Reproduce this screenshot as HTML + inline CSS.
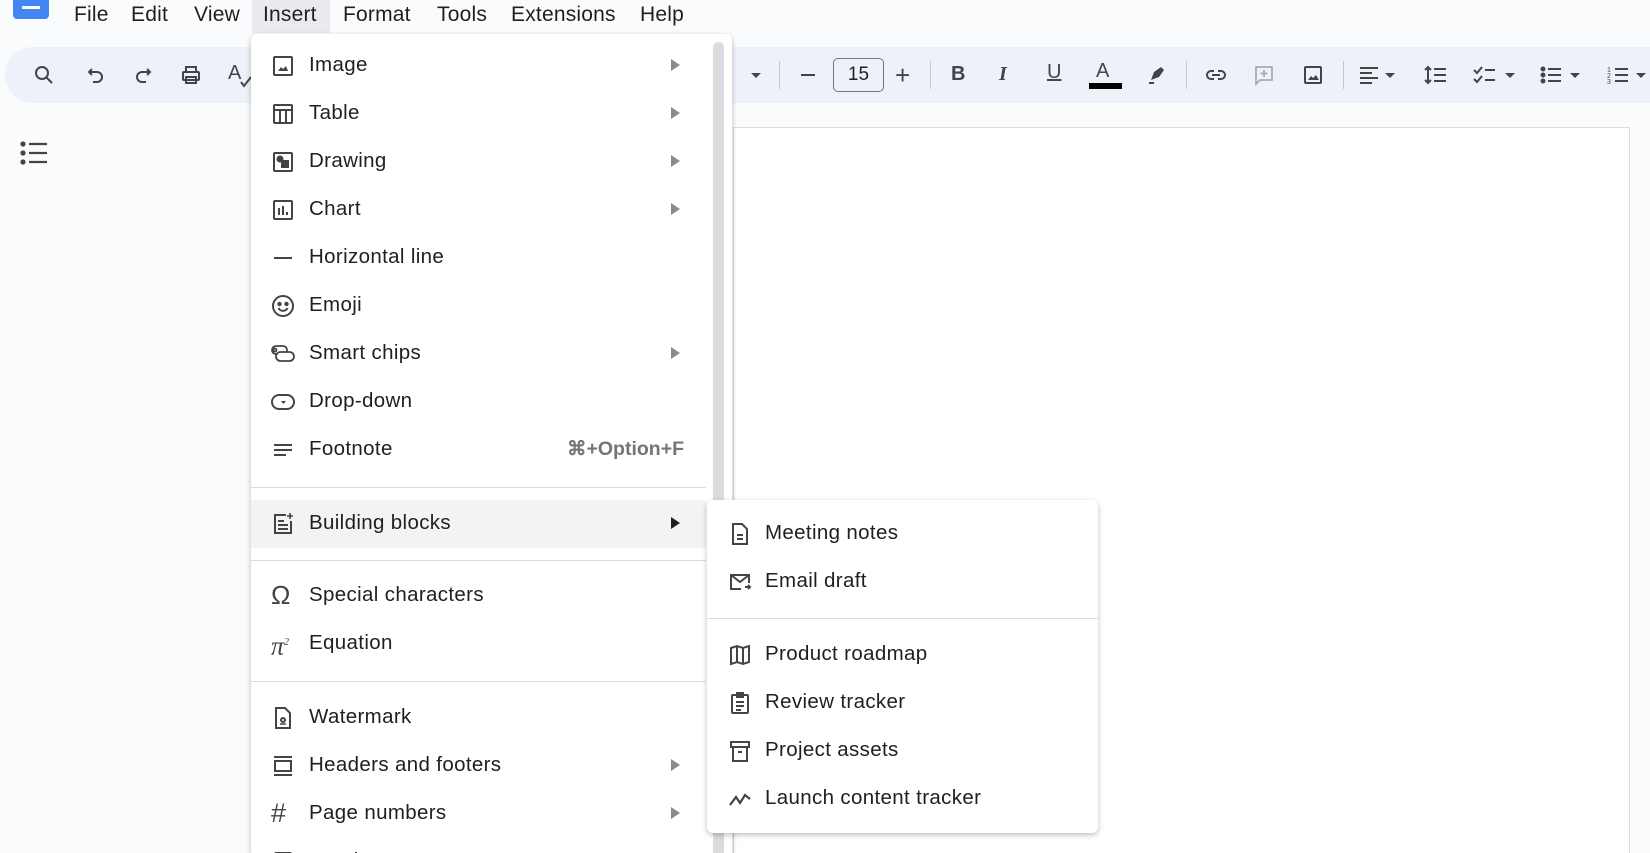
<!DOCTYPE html>
<html style="width:1650px;height:853px;overflow:hidden"><head><meta charset="utf-8"><style>
*{margin:0;padding:0;box-sizing:border-box}
body{width:1650px;height:853px;overflow:hidden;background:#f9fbfd;font-family:"Liberation Sans",Arial,sans-serif;color:#1f1f1f;position:relative}
.a{position:absolute}
.mb{position:absolute;top:3px;font-size:21px;color:#1f1f1f;letter-spacing:0.2px}
.tb{position:absolute;left:5px;top:47px;width:1645px;height:56px;background:#edf2fa;border-radius:28px 0 0 28px}
.ti{position:absolute;top:63px}
.sep{position:absolute;top:61px;width:1px;height:28px;background:#c7c7c7}
.menu{position:absolute;left:251px;top:34px;width:481px;height:819px;background:#fff;box-shadow:0 2px 6px rgba(0,0,0,.25);border-radius:6px 6px 0 0;overflow:hidden}
.it{position:absolute;left:0;width:470px;height:48px}
.it .ic{position:absolute;left:20px;top:12px;width:24px;height:24px}
.it .tx{position:absolute;left:58px;top:11px;font-size:20.5px;letter-spacing:0.35px;color:#1f1f1f}
.it .ar{position:absolute;left:420px;top:17px;width:0;height:0;border-left:9px solid #8a8a8a;border-top:6px solid transparent;border-bottom:6px solid transparent}
.hr{position:absolute;left:0;width:455px;height:1px;background:#dadce0}
.sub{position:absolute;left:707px;top:500px;width:391px;height:333px;background:#fff;box-shadow:0 2px 6px rgba(0,0,0,.25);border-radius:6px}
.sub .it{width:391px}
.sub .it .ic{left:21px}
.sub .it .tx{left:58px}
svg{overflow:visible}
</style></head><body>
<div class="a" style="left:13px;top:0;width:36px;height:19px;background:#4285f4;border-radius:0 0 4px 4px"></div>
<div class="a" style="left:22px;top:6px;width:18px;height:3px;background:#fff"></div>
<div class="a" style="left:252px;top:0;width:78px;height:33px;background:#e8eaed"></div>
<div class="mb" style="left:74px">File</div>
<div class="mb" style="left:131px">Edit</div>
<div class="mb" style="left:194px">View</div>
<div class="mb" style="left:263px">Insert</div>
<div class="mb" style="left:343px">Format</div>
<div class="mb" style="left:437px">Tools</div>
<div class="mb" style="left:511px">Extensions</div>
<div class="mb" style="left:640px">Help</div>

<div class="tb"></div>
<svg class="ti" style="left:32px" width="24" height="24" viewBox="0 0 24 24" fill="none" stroke="#444" stroke-width="2"><circle cx="10" cy="10" r="6"/><path d="M14.5 14.5L20 20"/></svg>
<svg class="ti" style="left:84px" width="24" height="24" viewBox="0 0 24 24" fill="none" stroke="#444" stroke-width="2"><path d="M8 6L5 9l3 3M5 9h8a5 5 0 010 10H9"/></svg>
<svg class="ti" style="left:131px" width="24" height="24" viewBox="0 0 24 24" fill="none" stroke="#444" stroke-width="2"><path d="M16 6l3 3-3 3M19 9h-8a5 5 0 000 10h4"/></svg>
<svg class="ti" style="left:179px" width="24" height="24" viewBox="0 0 24 24" fill="none" stroke="#444" stroke-width="2"><rect x="4" y="9" width="16" height="8" rx="1"/><path d="M7 9V4h10v5M7 14h10v6H7z"/></svg>
<div class="a" style="left:228px;top:62px;font-size:20px;color:#444">A</div>
<svg class="a" style="left:240px;top:76px" width="12" height="12" viewBox="0 0 12 12" fill="none" stroke="#444" stroke-width="2"><path d="M1 6l3 4 7-9"/></svg>
<svg class="ti" style="left:749px" width="14" height="24" viewBox="0 0 14 24"><path d="M2 10h10l-5 5z" fill="#444"/></svg>
<div class="sep" style="left:779px"></div>
<div class="a" style="left:801px;top:74px;width:14px;height:2px;background:#444"></div>
<div class="a" style="left:833px;top:58px;width:51px;height:34px;border:1.5px solid #747775;border-radius:5px;font-size:19px;text-align:center;line-height:31px">15</div>
<div class="a" style="left:895px;top:58px;font-size:26px;color:#444;line-height:34px">+</div>
<div class="sep" style="left:930px"></div>
<div class="a" style="left:951px;top:63px;font-size:20px;font-weight:bold;color:#444">B</div>
<div class="a" style="left:999px;top:63px;font-size:20px;font-weight:bold;font-style:italic;color:#444;font-family:'Liberation Serif',serif">I</div>
<div class="a" style="left:1047px;top:61px;font-size:20px;color:#444;text-decoration:underline">U</div>
<div class="a" style="left:1096px;top:60px;font-size:20px;color:#444">A</div>
<div class="a" style="left:1089px;top:83px;width:33px;height:6px;background:#000"></div>
<svg class="ti" style="left:1145px" width="24" height="24" viewBox="0 0 24 24"><path d="M6 17l3-8 7-5 3 3-5 7z" fill="#444"/><path d="M4 20h5" stroke="#444" stroke-width="2"/></svg>
<div class="sep" style="left:1186px"></div>
<svg class="ti" style="left:1204px" width="24" height="24" viewBox="0 0 24 24" fill="none" stroke="#444" stroke-width="2"><path d="M10 8H7a4 4 0 000 8h3M14 8h3a4 4 0 010 8h-3M8 12h8"/></svg>
<svg class="ti" style="left:1252px" width="24" height="24" viewBox="0 0 24 24" fill="none" stroke="#aaa" stroke-width="1.8"><path d="M4 4h16v13H8l-4 4z"/><path d="M12 7v7M8.5 10.5h7"/></svg>
<svg class="ti" style="left:1301px" width="24" height="24" viewBox="0 0 24 24" fill="none" stroke="#444" stroke-width="2"><rect x="4" y="4" width="16" height="16" rx="1"/><path d="M7 17l3-4 2 2 3-3 3 5z" fill="#444" stroke="none"/></svg>
<div class="sep" style="left:1343px"></div>
<svg class="ti" style="left:1357px" width="40" height="24" viewBox="0 0 40 24" stroke="#444" stroke-width="2"><path d="M3 5h18M3 10h12M3 15h18M3 20h12"/><path d="M28 10h10l-5 5z" fill="#444" stroke="none"/></svg>
<svg class="ti" style="left:1423px" width="26" height="24" viewBox="0 0 26 24" stroke="#444" stroke-width="2" fill="none"><path d="M5 4v16M2 7l3-3 3 3M2 17l3 3 3-3M11 6h12M11 12h12M11 18h12"/></svg>
<svg class="ti" style="left:1472px" width="46" height="24" viewBox="0 0 46 24" stroke="#444" stroke-width="2" fill="none"><path d="M2 7l3 3 5-6M2 16l3 3 5-6M13 7h10M13 17h10"/><path d="M33 10h10l-5 5z" fill="#444" stroke="none"/></svg>
<svg class="ti" style="left:1539px" width="46" height="24" viewBox="0 0 46 24" stroke="#444" stroke-width="2" fill="none"><circle cx="4" cy="6" r="1.5" fill="#444"/><circle cx="4" cy="12" r="1.5" fill="#444"/><circle cx="4" cy="18" r="1.5" fill="#444"/><path d="M9 6h13M9 12h13M9 18h13"/><path d="M31 10h10l-5 5z" fill="#444" stroke="none"/></svg>
<svg class="ti" style="left:1606px" width="40" height="24" viewBox="0 0 40 24" stroke="#444" stroke-width="2" fill="none"><path d="M9 6h13M9 12h13M9 18h13"/><text x="1" y="9" font-size="7" fill="#444" stroke="none">1</text><text x="1" y="15" font-size="7" fill="#444" stroke="none">2</text><text x="1" y="21" font-size="7" fill="#444" stroke="none">3</text><path d="M30 10h10l-5 5z" fill="#444" stroke="none"/></svg>

<svg class="a" style="left:20px;top:141px" width="28" height="24" viewBox="0 0 28 24" stroke="#444" stroke-width="2.2"><circle cx="3" cy="3" r="1.5" fill="#444"/><circle cx="3" cy="12" r="1.5" fill="#444"/><circle cx="3" cy="21" r="1.5" fill="#444"/><path d="M9 3h18M9 12h18M9 21h18"/></svg>

<div class="a" style="left:733px;top:127px;width:897px;height:726px;background:#fff;border:1px solid #dadce0;border-bottom:none"></div>

<div class="menu">
 <div class="a" style="left:462px;top:8px;width:11px;height:820px;background:#dadce0;border-radius:6px"></div>
 <div class="it" style="top:8px"><svg class="ic" viewBox="0 0 24 24" fill="none" stroke="#444" stroke-width="2"><rect x="3" y="3" width="18" height="18" rx="1"/><path d="M7 17l3-4 2 2 3-3 2 5z" fill="#444" stroke="none"/></svg><div class="tx">Image</div><div class="ar"></div></div>
 <div class="it" style="top:56px"><svg class="ic" viewBox="0 0 24 24" fill="none" stroke="#444" stroke-width="2"><rect x="3" y="3" width="18" height="18" rx="1"/><path d="M3 8h18M9 8v13M15 8v13"/></svg><div class="tx">Table</div><div class="ar"></div></div>
 <div class="it" style="top:104px"><svg class="ic" viewBox="0 0 24 24" fill="none" stroke="#444" stroke-width="2"><rect x="3" y="3" width="18" height="18" rx="1"/><circle cx="9" cy="9" r="2.5" fill="#444"/><rect x="11" y="11" width="6" height="6" fill="#444"/></svg><div class="tx">Drawing</div><div class="ar"></div></div>
 <div class="it" style="top:152px"><svg class="ic" viewBox="0 0 24 24" fill="none" stroke="#444" stroke-width="2"><rect x="3" y="3" width="18" height="18" rx="1"/><path d="M8 17v-7M12 17V8M16 17v-3"/></svg><div class="tx">Chart</div><div class="ar"></div></div>
 <div class="it" style="top:200px"><svg class="ic" viewBox="0 0 24 24" stroke="#444" stroke-width="2"><path d="M3 12h18"/></svg><div class="tx">Horizontal line</div></div>
 <div class="it" style="top:248px"><svg class="ic" viewBox="0 0 24 24" fill="none" stroke="#444" stroke-width="2"><circle cx="12" cy="12" r="10"/><circle cx="8.5" cy="10" r="1.2" fill="#444"/><circle cx="15.5" cy="10" r="1.2" fill="#444"/><path d="M7.5 14a5 5 0 009 0"/></svg><div class="tx">Emoji</div></div>
 <div class="it" style="top:296px"><svg class="ic" viewBox="0 0 24 24" fill="none" stroke="#444" stroke-width="1.8"><rect x="1" y="4" width="15" height="8" rx="4"/><rect x="5" y="10" width="18" height="9" rx="4.5" fill="#fff"/><circle cx="4" cy="8" r="1.5"/></svg><div class="tx">Smart chips</div><div class="ar"></div></div>
 <div class="it" style="top:344px"><svg class="ic" viewBox="0 0 24 24" fill="none" stroke="#444" stroke-width="2"><rect x="1" y="5" width="22" height="14" rx="7"/><path d="M10 11h5l-2.5 3z" fill="#444" stroke="none"/></svg><div class="tx">Drop-down</div></div>
 <div class="it" style="top:392px"><svg class="ic" viewBox="0 0 24 24" stroke="#444" stroke-width="2"><path d="M3 7h18M3 12h18M3 17h12"/></svg><div class="tx">Footnote</div><div class="a" style="right:37px;top:11px;font-size:19.5px;color:#757575;font-weight:bold">⌘+Option+F</div></div>
 <div class="hr" style="top:453px"></div>
 <div class="it" style="top:466px;background:#f1f3f4;width:455px;height:48px"><svg class="ic" viewBox="0 0 24 24" fill="none" stroke="#444" stroke-width="2"><path d="M15 3H4v18h16V9"/><path d="M7 9h6M7 13h10M7 17h10"/><path d="M19 1v6M16 4h6" stroke-width="1.6"/></svg><div class="tx">Building blocks</div><div class="ar" style="border-left-color:#1f1f1f"></div></div>
 <div class="hr" style="top:526px"></div>
 <div class="it" style="top:538px"><div class="ic" style="font-size:26px;line-height:24px;top:11px;color:#444">Ω</div><div class="tx">Special characters</div></div>
 <div class="it" style="top:586px"><div class="ic" style="font-size:26px;line-height:24px;top:11px;color:#444;font-family:'Liberation Serif',serif;font-style:italic">π<sup style="font-size:10px">2</sup></div><div class="tx">Equation</div></div>
 <div class="hr" style="top:647px"></div>
 <div class="it" style="top:660px"><svg class="ic" viewBox="0 0 24 24" fill="none" stroke="#444" stroke-width="2"><path d="M5 2h9l5 5v15H5z"/><circle cx="12" cy="14" r="2"/><path d="M9 18h6" stroke-width="1.5"/></svg><div class="tx">Watermark</div></div>
 <div class="it" style="top:708px"><svg class="ic" viewBox="0 0 24 24" fill="none" stroke="#444" stroke-width="2"><path d="M3 3h18M3 21h18"/><rect x="4" y="7" width="16" height="10"/></svg><div class="tx">Headers and footers</div><div class="ar"></div></div>
 <div class="it" style="top:756px"><div class="ic" style="font-size:27px;line-height:24px;top:11px;color:#444">#</div><div class="tx">Page numbers</div><div class="ar"></div></div>
 <div class="it" style="top:804px"><svg class="ic" viewBox="0 0 24 24" fill="none" stroke="#444" stroke-width="2"><rect x="4" y="3" width="16" height="18" rx="1"/></svg><div class="tx">Break</div></div>
</div>

<div class="sub">
 <div class="it" style="top:10px"><svg class="ic" viewBox="0 0 24 24" fill="none" stroke="#444" stroke-width="2"><path d="M5 2h9l5 5v15H5z"/><path d="M9 13h6M9 17h6"/></svg><div class="tx">Meeting notes</div></div>
 <div class="it" style="top:58px"><svg class="ic" viewBox="0 0 24 24" fill="none" stroke="#444" stroke-width="2"><path d="M13 19H3V5h18v8"/><path d="M3 5l9 7 9-7"/><path d="M17 17h5M20 15l2 2-2 2"/></svg><div class="tx">Email draft</div></div>
 <div class="hr" style="top:118px;width:391px"></div>
 <div class="it" style="top:131px"><svg class="ic" viewBox="0 0 24 24" fill="none" stroke="#444" stroke-width="2"><path d="M3 5l6-2 6 2 6-2v16l-6 2-6-2-6 2zM9 3v16M15 5v16"/></svg><div class="tx">Product roadmap</div></div>
 <div class="it" style="top:179px"><svg class="ic" viewBox="0 0 24 24" fill="none" stroke="#444" stroke-width="2"><rect x="4" y="4" width="16" height="18" rx="1"/><path d="M9 2h6v4H9zM8 11h8M8 15h8M8 19h5"/></svg><div class="tx">Review tracker</div></div>
 <div class="it" style="top:227px"><svg class="ic" viewBox="0 0 24 24" fill="none" stroke="#444" stroke-width="2"><path d="M3 3h18v5H3zM5 8v14h14V8M10 13h4"/></svg><div class="tx">Project assets</div></div>
 <div class="it" style="top:275px"><svg class="ic" viewBox="0 0 24 24" fill="none" stroke="#444" stroke-width="2.2"><path d="M2 18l6-8 4 6 5-8 5 4"/></svg><div class="tx">Launch content tracker</div></div>
</div>
</body></html>
